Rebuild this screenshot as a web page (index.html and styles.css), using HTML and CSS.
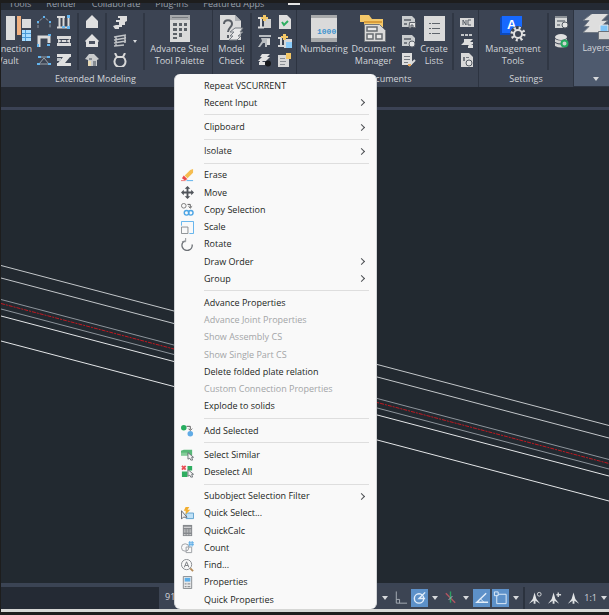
FILE: index.html
```html
<!DOCTYPE html>
<html lang="en">
<head>
<meta charset="utf-8">
<title>Advance Steel</title>
<link rel="stylesheet" href="styles.css">
</head>
<body>
<div class="app">
  <nav class="tabs">
    <a href="#">Tools</a><a href="#">Render</a><a href="#">Collaborate</a><a href="#">Plug-ins</a><a href="#">Featured Apps</a><span class="tab-toggle"></span>
  </nav>

  <header class="ribbon">
    <section class="panel panel-modeling">
      <div class="tools">
        <button class="big vault"><svg width="34" height="27" viewBox="0 0 34 27"><path fill="#dcdcdc" d="M9 1h9v24H9zM25 4h9v9h-9z"/><path fill="#f0b080" d="M20 1h4v19h-4z"/><path fill="#a9dcff" d="M25 15h9v11h-9z"/><path stroke="#4a9ad8" d="M25 18.500h9M25 22.500h9M28.500 15v11"/></svg><span>Connection<br>Vault</span></button>
        <div class="col">
          <button aria-label="Portal frame"><svg viewBox="0 0 14 14"><path d="M1 13V7l6-5 6 5v6" fill="none" stroke="#8f98a3" stroke-dasharray="3 1"/><path fill="#63b4ee" d="M6 1h2v2H6zM0 6h2v2H0zM12 6h2v2h-2z"/></svg></button>
          <button aria-label="Frame corner"><svg viewBox="0 0 14 14"><path d="M2 13V3h10v6" fill="none" stroke="#dadada" stroke-width="3"/><path fill="#63b4ee" d="M0 10h2v3H0zM11 0h3v2h-3zM10 10h3v2h-3z"/></svg></button>
          <button aria-label="Truss"><svg viewBox="0 0 14 14"><path d="M1 4h12M1 11h12M2 11l5-6 5 6" fill="none" stroke="#9ba3ac"/><path fill="#63b4ee" d="M1 3h3v2H1zM10 3h3v2h-3zM0 10h3v2H0zM11 10h3v2h-3z"/></svg></button>
        </div>
        <div class="col">
          <button aria-label="Columns"><svg viewBox="0 0 14 14"><path d="M0 2h8M2.500 2v10M6.500 2v10M11.500 3v9M0 12.500h13" fill="none" stroke="#dadada" stroke-width="2"/><path fill="#63b4ee" d="M10 0h3v3h-3zM5 11h3v2H5zM10 11h3v3h-3z"/></svg></button>
          <button aria-label="Bracing"><svg viewBox="0 0 14 14"><path fill="#dadada" d="M0 2h14v3H0zM0 9h14v3H0zM1 5l4 2-4 2zM13 5L9 7l4 2zM5 6h4v2H5z"/></svg></button>
          <button aria-label="Purlins"><svg viewBox="0 0 14 14"><path fill="#e0e0e0" d="M0 1h14v3H0zM0 10h14v3H0zM6 4h7l-5 6H1z"/><path fill="#bfc4c9" d="M0 5h4v3H0z"/></svg></button>
        </div>
        <i class="sep"></i>
        <div class="col">
          <button aria-label="House"><svg viewBox="0 0 14 14"><path fill="#e0e0e0" d="M7 0l6 6v7H1V6z"/></svg></button>
          <button aria-label="House opening"><svg viewBox="0 0 14 14"><path fill="#e0e0e0" d="M7 0l7 7-1 1v5H1V8L0 7z"/><path fill="#4b5260" d="M4 7h6v3H4z"/></svg></button>
          <button aria-label="House parts"><svg viewBox="0 0 14 14"><path fill="#c9cbcc" d="M4 1h5l5 5-2 1v6H3V7L0 6z"/><path fill="#858b92" d="M8 8h3v5H8zM4 5h3v2H4z"/><path fill="#e7d9b4" d="M3 8h3v5H3z"/></svg></button>
        </div>
        <i class="sep"></i>
        <div class="col">
          <button aria-label="Stairs"><svg viewBox="0 0 14 14"><path fill="#dedede" d="M5 1h9v5l-2 1v3H9v2H6v2H2l-2-3 3-1h3V7H3V5h4V3H5z"/></svg></button>
          <button aria-label="Railing"><svg viewBox="0 0 14 14"><path d="M1 3l12-2M1 6l12-2M1 9l12-2M1 12l10-1M3 2v10M12 1v8" fill="none" stroke="#c2c5c8" stroke-width="1.500"/></svg></button>
          <button aria-label="Cage"><svg viewBox="0 0 14 14"><path d="M2 0l2 4h6l2-4M4 4a5.500 5.500 0 1 0 6 0" fill="none" stroke="#d8d8d8" stroke-width="2"/></svg></button>
        </div>
        <i class="arrow mini"></i>
        <i class="sep"></i>
        <button class="big w57"><svg width="20" height="27" viewBox="0 0 20 27"><path fill="#dadada" d="M0 0h20v27H0z"/><path fill="#a5a8ab" d="M0 0h20v5H0z"/><path stroke="#777b80" fill="none" d="M2 2.500h16"/><path fill="#5d6268" d="M3 8h4v3H3zM9 8h3v3H9zM14 8h3v3h-3zM3 13h4v3H3zM9 13h3v3H9zM14 13h3v3h-3zM3 18h4v2H3zM9 18h3v4H9zM3 22h4v2H3z"/></svg><span>Advance Steel<br>Tool Palette</span></button>
      </div>
      <h2>Extended Modeling</h2>
    </section>

    <section class="panel">
      <div class="tools">
        <button class="big w25"><svg width="24" height="27" viewBox="0 0 24 27"><path fill="#dcdcdc" d="M0 0h15l6 6v19H0z"/><path fill="#aeb1b5" d="M15 0v6h6z"/><path d="M4 9c0-5 8-5 8 0 0 3-4 4-4 8M8 20v3" fill="none" stroke="#5a5f66" stroke-width="2"/><path fill="#e8e8e8" stroke="#777c83" d="M10 17l5-4h8l-3 4h3l-5 4h3l-4 4H9l4-4h-3l4-4z"/></svg><span>Model<br>Check</span></button>
        <i class="sep"></i>
        <div class="col">
          <button aria-label="New number"><svg viewBox="0 0 14 14"><path d="M0 3h3v9M0 12.500h6" fill="none" stroke="#ddd" stroke-width="2"/><path fill="#cfcfcf" d="M6 4h7v9H6z"/><path fill="#f3c766" d="M5 0h3v2h2v2H8v2H5V4H3V2h2z"/></svg></button>
          <button aria-label="Section text"><svg viewBox="0 0 14 14"><path fill="#b9bdc1" d="M1 1h12v2H1zM3 4h9v2H9v7H7V9H5l-3 4H0l4-6z"/><path fill="#dedede" d="M9 5h3v6H9z"/></svg></button>
          <button aria-label="Plate check"><svg viewBox="0 0 14 14"><path fill="#e2e2e2" d="M4 1h8L9 4h3L8 8H5l-4 4 1-4H0l4-4H2z"/><path fill="#e2e2e2" d="M1 9h6v3H1z"/><circle cx="10" cy="10.500" r="3" fill="#17191c"/></svg></button>
        </div>
        <div class="col">
          <button aria-label="Approve"><svg viewBox="0 0 14 14"><path fill="#dedede" d="M1 0h8l4 4v10H1z"/><path d="M4 7l2 3 4-4" fill="none" stroke="#2fae61" stroke-width="2"/></svg></button>
          <button aria-label="Number table"><svg viewBox="0 0 14 14"><path fill="#d8d8d8" d="M0 3h4v8h2v2H0v-2h2V5H0zM6 5h8v9H6z"/><path fill="#8acbf8" d="M8 8h6v6H8z"/><path fill="#f3c766" d="M5 0h3v2h2v2H8v2H5V4H3V2h2z"/></svg></button>
          <button aria-label="Drawing list"><svg viewBox="0 0 14 14"><path fill="#d8d8d8" d="M0 2h11v12H0z"/><path stroke="#8a8e93" d="M2 5.500h5M2 8.500h6M2 11.500h5"/><path fill="#f3c766" d="M8 0h5v6H8z"/></svg></button>
        </div>
      </div>
    </section>

    <section class="panel">
      <div class="tools">
        <button class="big w42"><svg width="26" height="27" viewBox="0 0 26 27"><path fill="#dadada" d="M0 0h26v27H0z"/><path fill="#a7a9ab" d="M0 0h26v3H0zM0 23h26v4H0z"/><text x="6" y="19" class="digits">1000</text></svg><span>Numbering</span></button>
        <button class="big w45"><svg width="27" height="27" viewBox="0 0 27 27"><path fill="#f4c869" d="M0 0h9l3 4h11v15H4V7H0z"/><path fill="#d99d3b" d="M4 6h18v2H4z"/><path fill="#dadada" stroke="#73777c" d="M4.500 9.500h15l6 6v11h-21z"/><path fill="#e7e7e7" stroke="#676c72" stroke-width="1.500" d="M7 12h10v4H7zM7 19h6v5H7zM16 19h6v5h-6z"/></svg><span>Document<br>Manager</span></button>
        <div class="col">
          <button aria-label="Find drawing"><svg viewBox="0 0 14 14"><path fill="#c9ccce" d="M0 1h10l3 3v8H0z"/><path fill="#747980" d="M2 4h7v2H2zM2 8h3v2H2z"/><path fill="#e6e6e6" stroke="#5c6169" d="M7.500 7.500h6v5H11V10H9v3H7z"/></svg></button>
          <button aria-label="Drawing settings"><svg viewBox="0 0 14 14"><path fill="#c9ccce" d="M0 1h10l3 3v8H0z"/><path fill="#747980" d="M2 4h7v2H2zM2 8h3v2H2z"/><circle cx="10" cy="10" r="3" fill="#e6e6e6" stroke="#5c6169"/></svg></button>
          <button aria-label="Edit drawing"><svg viewBox="0 0 14 14"><path fill="#dedede" d="M0 0h10v12H0z"/><path stroke="#777c82" d="M2 3.500h6M2 6.500h6M2 9.500h4"/><path d="M7 13l6-6" stroke="#dadada" stroke-width="2"/><path fill="#e5a55a" d="M6 11h3v2H6z"/></svg></button>
        </div>
        <button class="big w24"><svg width="21" height="27" viewBox="0 0 21 27"><path fill="#dadada" d="M0 1h21v25H0z"/><path stroke="#5f646b" d="M8 8.500h8M8 13.500h8M8 18.500h8"/><path fill="#5f646b" d="M5 8h2v1H5zM5 13h2v1H5zM5 18h2v1H5z"/></svg><span>Create<br>Lists</span></button>
        <i class="sep"></i>
        <div class="col">
          <button aria-label="NC files"><svg viewBox="0 0 14 14"><path fill="#d8d8d8" d="M0 3h14v9H0z"/><path d="M3 10V5l3 5V5M11 5H8v5h3" fill="none" stroke="#5a6068"/></svg></button>
          <button aria-label="DXF files"><svg viewBox="0 0 14 14"><path stroke="#c3c6c9" stroke-width="2" stroke-dasharray="3 1" d="M1 1h12"/><path fill="#dedede" d="M4 5h9l-3 3h3v2l-2 1h2v3H8v-2l1-1H1l3-3z"/></svg></button>
          <button aria-label="NC settings"><svg viewBox="0 0 14 14"><path fill="#d8d8d8" d="M1 0h8l4 4v10H1z"/><path fill="#747980" d="M3 4h2v4H3zM6 4h3v1H6z"/><circle cx="9" cy="10" r="3" fill="#e5e5e5" stroke="#555b64"/></svg></button>
        </div>
      </div>
      <h2>Documents</h2>
    </section>

    <section class="panel">
      <div class="tools">
        <button class="big w56"><svg width="26" height="27" viewBox="0 0 26 27"><path fill="#1769ff" d="M2 1h20v19H2z"/><path fill="#0d4abb" d="M2 1L0 3v17h20l2-2H2z"/><text x="7" y="14" class="brand">A</text><circle cx="18" cy="19" r="5" fill="none" stroke="#3c4453" stroke-width="6"/><circle cx="18" cy="19" r="6" fill="none" stroke="#e0e0e0" stroke-width="3" stroke-dasharray="2 2.700"/><circle cx="18" cy="19" r="4" fill="#3c4453" stroke="#e0e0e0" stroke-width="2"/></svg><span>Management<br>Tools</span></button>
        <i class="sep"></i>
        <div class="col">
          <button aria-label="Table settings"><svg viewBox="0 0 14 14"><path fill="#d5d7d8" d="M0 1h12v12H0z"/><path fill="#8b9096" d="M0 1h12v2H0zM2 5h8v2H2zM2 9h3v2H2z"/><circle cx="10" cy="10" r="3" fill="#e6e6e6" stroke="#555b64"/></svg></button>
          <button aria-label="Update database"><svg viewBox="0 0 14 14"><ellipse cx="6" cy="3" rx="6" ry="3" fill="#e0e0e0"/><path fill="#d4d4d4" d="M0 5q6 3 12 0v3q-6 3-12 0zM0 9q6 3 12 0v3q-6 3-12 0z"/><circle cx="9.500" cy="9.500" r="3" fill="#ccd8cf" stroke="#24ad60" stroke-width="2"/></svg></button>
        </div>
      </div>
      <h2>Settings</h2>
    </section>

    <section class="panel panel-layers">
      <button class="big w44"><svg width="26" height="27" viewBox="0 0 26 27"><path fill="#dedede" stroke="#707883" d="M0 6.500l9-7h17l-7 7h6l-7 6h6l-6 6H0l6-6H1l5-6z"/><path fill="#7fc5f8" stroke="#e9e9e9" d="M17 11h8v8h-8z"/><path fill="#d4d4d4" stroke="#6b7179" d="M15.500 17.500h11v8h-11z"/></svg><span>Layers</span></button>
      <i class="arrow"></i>
    </section>
  </header>

  <div class="file-strip"></div>

  <main class="canvas">
    <svg viewBox="0 110 608 473" preserveAspectRatio="none" aria-label="Steel beam model">
      <g fill="none" stroke="#c3c7ca">
        <path d="M0 265.500L608 425.500M0 278L608 438"/>
        <path stroke="#8d949b" d="M0 299.500L608 459.500M0 309L608 469"/>
        <path stroke="#e4e6e8" d="M0 316L608 476M0 341L608 501"/>
        <path stroke="#c01820" stroke-dasharray="4 1 2 1" d="M0 303.500L608 463.500"/>
      </g>
    </svg>
  </main>

  <footer class="status">
    <output class="coords">91</output>
    <div class="status-tools">
      <i class="arrow"></i>
      <button aria-label="Ortho"><svg viewBox="0 0 16 16"><path d="M3.500 1v12.500H15M3.500 9.500H7v4" fill="none" stroke="#aab0b8"/></svg></button>
      <button class="on" aria-label="Polar tracking"><svg viewBox="0 0 16 16"><circle cx="7.500" cy="8.500" r="5" fill="none" stroke="#e3eefa" stroke-width="1.500"/><path d="M14 8.500H7.500L14 2" fill="none" stroke="#e3eefa" stroke-width="1.500"/></svg></button>
      <i class="arrow"></i>
      <button aria-label="Isodraft"><svg viewBox="0 0 16 16"><path d="M3 3l10 10" stroke="#b45460" stroke-width="1.500"/><path d="M8 1v12" stroke="#2d9f63" stroke-width="1.500"/><path d="M6 10l4-4" stroke="#b9bec5"/></svg></button>
      <i class="arrow"></i>
      <button class="on" aria-label="Object snap tracking"><svg viewBox="0 0 16 16"><path d="M13 3L3 12.500h12" fill="none" stroke="#e3eefa" stroke-width="1.500"/><path d="M7 9l4 4" stroke="#e3eefa"/></svg></button>
      <button class="on" aria-label="Object snap"><svg viewBox="0 0 16 16"><path d="M4 4h10v10H4z" fill="none" stroke="#e3eefa"/><path d="M1.500 1.500h4v4h-4z" fill="#5d91c9" stroke="#e3eefa"/></svg></button>
      <i class="arrow"></i>
      <i class="status-gap"></i>
      <button aria-label="Annotation visibility"><svg viewBox="0 0 16 16"><path d="M7 2l2 7 4 5-5-3v3H6v-3l-5 3 4-5z" fill="#e1e3e5"/><circle cx="12" cy="4" r="2" fill="none" stroke="#d5d8da"/></svg></button>
      <button aria-label="Auto scale"><svg viewBox="0 0 16 16"><path d="M7 2l2 7 4 5-5-3v3H6v-3l-5 3 4-5z" fill="#e1e3e5"/><path d="M12 2v5M10 4.500h5" stroke="#d5d8da" stroke-width="1.500"/></svg></button>
      <button aria-label="Annotation scale"><svg viewBox="0 0 16 16"><path d="M8 2l2 7 4 5-5-3v3H7v-3l-5 3 4-5z" fill="#e1e3e5"/></svg></button>
      <button class="scale">1:1</button>
      <i class="arrow"></i>
    </div>
  </footer>

  <div class="menu" role="menu">
    <button role="menuitem">Repeat VSCURRENT</button>
    <button role="menuitem" class="sub">Recent Input</button>
    <hr>
    <button role="menuitem" class="sub">Clipboard</button>
    <hr>
    <button role="menuitem" class="sub">Isolate</button>
    <hr>
    <button role="menuitem"><svg viewBox="0 0 14 14"><path fill="#f5bd50" d="M10 1l3-1v4l-6 6-3-3z"/><path fill="#e94949" d="M3 7l4 4-3 1-3-2z"/><path stroke="#ee7777" d="M0 12.500h5"/><path stroke="#55aeea" d="M6 12.500h7"/></svg>Erase</button>
    <button role="menuitem"><svg viewBox="0 0 14 14"><path fill="#50545a" d="M6 6V3H4l3-3 3 3H8v3h3V4l3 3-3 3V8H8v3h2l-3 3-3-3h2V8H3v2L0 7l3-3v2z"/></svg>Move</button>
    <button role="menuitem"><svg viewBox="0 0 14 14"><circle cx="3" cy="3" r="2.500" fill="none" stroke="#777"/><path d="M7 1.500h3V5M8 3.500l2 2 2-2" fill="none" stroke="#555"/><circle cx="6" cy="10.500" r="2.500" fill="none" stroke="#4ca5e5" stroke-width="1.500"/><circle cx="10.500" cy="10.500" r="2.500" fill="none" stroke="#4ca5e5" stroke-width="1.500"/></svg>Copy Selection</button>
    <button role="menuitem"><svg viewBox="0 0 14 14"><path d="M.5 5V.5h13v13H9" fill="none" stroke="#58aeea"/><path d="M.5 6.500h7v7h-7z" fill="none" stroke="#85898e"/></svg>Scale</button>
    <button role="menuitem"><svg viewBox="0 0 14 14"><path d="M4 3a5.500 5.500 0 1 0 8 4" fill="none" stroke="#6d7176" stroke-width="1.500"/><path d="M5 0v4H1" fill="none" stroke="#888c91"/></svg>Rotate</button>
    <button role="menuitem" class="sub">Draw Order</button>
    <button role="menuitem" class="sub">Group</button>
    <hr>
    <button role="menuitem">Advance Properties</button>
    <button role="menuitem" disabled>Advance Joint Properties</button>
    <button role="menuitem" disabled>Show Assembly CS</button>
    <button role="menuitem" disabled>Show Single Part CS</button>
    <button role="menuitem">Delete folded plate relation</button>
    <button role="menuitem" disabled>Custom Connection Properties</button>
    <button role="menuitem">Explode to solids</button>
    <hr>
    <button role="menuitem"><svg viewBox="0 0 14 14"><circle cx="3" cy="4" r="3" fill="#27ad5f"/><path d="M6 2.500h4V6M8 5l2 2 2-2" fill="none" stroke="#555"/><circle cx="10" cy="10.500" r="3" fill="#60abe6"/></svg>Add Selected</button>
    <hr>
    <button role="menuitem"><svg viewBox="0 0 14 14"><path fill="#58b878" d="M3 2h9v6H0V3z"/><path fill="#83cc98" d="M0 5h7v3H0z"/><path fill="#f3f3f3" stroke="#6c7176" d="M7.500 5v7l2-1 1 2h2l-1-3h2z"/></svg>Select Similar</button>
    <button role="menuitem"><svg viewBox="0 0 14 14"><path fill="#30ae61" d="M7 1h5v5H7zM1 7h6v6H1z"/><path d="M1 1l4 4M5 1L1 5" stroke="#e84d54" stroke-width="2"/><path fill="#f3f3f3" stroke="#6c7176" d="M7.500 5v7l2-1 1 2h2l-1-3h2z"/></svg>Deselect All</button>
    <hr>
    <button role="menuitem" class="sub">Subobject Selection Filter</button>
    <button role="menuitem"><svg viewBox="0 0 14 14"><path fill="#bfe1f7" stroke="#5d9fcb" d="M5.500 6.500h8v6h-8z"/><path fill="#eee" stroke="#61666c" d="M.5 4v9l2-2h4z"/><path fill="#f2ae2e" d="M5 0h4L7 3h3L5 8V4H3z"/></svg>Quick Select...</button>
    <button role="menuitem"><svg viewBox="0 0 14 14"><path fill="#85888c" d="M2 1h10v12H2z"/><path stroke="#eee" d="M3 3.500h8"/><path stroke="#ddd" stroke-dasharray="2 1" d="M3 6.500h8M3 8.500h8M3 11.500h8"/></svg>QuickCalc</button>
    <button role="menuitem"><svg viewBox="0 0 14 14"><circle cx="4.500" cy="7" r="4" fill="none" stroke="#999da1"/><path d="M5.500 6.500h6v6h-6z" fill="none" stroke="#999da1"/><path d="M8 2h6M8 4h6M9.500 0v6M12 0v6" stroke="#52a8e5"/></svg>Count</button>
    <button role="menuitem"><svg viewBox="0 0 14 14"><circle cx="6" cy="6" r="5.500" fill="none" stroke="#85898e"/><path d="M3.500 9L6 3l2.500 6M4.500 7h3" fill="none" stroke="#777b80"/><path d="M10 10l3 3" stroke="#b58c59" stroke-width="2"/></svg>Find...</button>
    <button role="menuitem"><svg viewBox="0 0 14 14"><path fill="#e7e8e9" stroke="#85898e" d="M2.500.5h9v13h-9z"/><path fill="#5dafe9" d="M4 2h6v4H4z"/><path stroke="#777b80" d="M4 8.500h2M7 8.500h3M4 11.500h2M7 11.500h3"/></svg>Properties</button>
    <button role="menuitem">Quick Properties</button>
  </div>
</div>
</body>
</html>
```

FILE: styles.css
```css
* { box-sizing: border-box; }

body {
  margin: 0;
  background: #1d1d1d;
  font: 9px/12px "Open Sans", "Noto Sans", sans-serif;
}

button {
  border: 0;
  padding: 0;
  margin: 0;
  background: none;
  color: inherit;
  font: inherit;
}

svg { display: block; flex: none; }

.app {
  position: relative;
  display: flex;
  flex-direction: column;
  height: 100vh;
  padding: 3px 0 3px 1px;
  overflow: hidden;
  color: #d2d5da;
}

/* Ribbon tabs */
.tabs {
  display: flex;
  flex: none;
  align-items: flex-end;
  gap: 15px;
  height: 7px;
  padding-left: 8px;
  overflow: hidden;
  background: #242a34;
}

.tabs a { color: #9ba1aa; text-decoration: none; white-space: nowrap; }

.tab-toggle {
  align-self: flex-start;
  width: 12px;
  height: 2px;
  margin-left: 9px;
  background: #e4e4e4;
}

/* Ribbon */
.ribbon {
  display: flex;
  flex: none;
  height: 77px;
  overflow: hidden;
  background: #3c4453;
}

.panel {
  display: flex;
  flex: none;
  flex-direction: column;
  border-right: 1px solid #2d3441;
}

.panel-modeling { margin-left: -22px; }

.panel h2 {
  margin: 0;
  font-size: 9px;
  font-weight: 400;
  line-height: 14px;
  text-align: center;
}

.tools {
  display: flex;
  gap: 6px;
  height: 62px;
  padding: 5px 4px 0 6px;
}

.col {
  display: flex;
  flex-direction: column;
  gap: 5px;
}

.col svg { width: 14px; height: 14px; }

.sep {
  width: 2px;
  height: 57px;
  margin-top: -2px;
  background: #303744;
}

.big {
  display: flex;
  flex: none;
  flex-direction: column;
  align-items: center;
  gap: 1px;
  white-space: nowrap;
}

.vault { width: 46px; }
.vault svg { margin-left: 12px; }
.w24 { width: 24px; }
.w25 { width: 25px; }
.w42 { width: 42px; }
.w44 { width: 44px; }
.w45 { width: 45px; }
.w56 { width: 56px; }
.w57 { width: 57px; }

.digits { fill: #3f93cf; font: bold 8px "Liberation Mono", monospace; }
.brand { fill: #fff; font: bold 13px "Liberation Sans", sans-serif; }

.arrow {
  width: 0;
  height: 0;
  border: 3px solid transparent;
  border-top: 4px solid #d7d9dc;
  border-bottom: 0;
}

.arrow.mini {
  margin-top: 25px;
  border-width: 3px 2px 0;
}

.panel-layers {
  flex: 1;
  align-items: flex-start;
  justify-content: space-between;
  min-width: 0;
  padding: 4px 0 5px;
  border: 0;
  border-bottom: 1px solid #2d3441;
  background: #4e5a6e;
}

.panel-layers .arrow { margin-left: 19px; }

.file-strip {
  flex: none;
  height: 23px;
  border-bottom: 3px solid #3b4255;
  background: #242932;
}

/* Drawing area */
.canvas {
  flex: 1;
  min-height: 0;
  background: #222930;
}

.canvas svg { width: 100%; height: 100%; }

/* Status bar */
.status {
  display: flex;
  flex: none;
  height: 29px;
  padding-left: 158px;
  border-top: 4px solid #3b4454;
  border-bottom: 3px solid #d6d7d5;
  background: #242a34;
}

.coords {
  flex: 1;
  padding: 4px 6px;
  background: #3c4453;
}

.status-tools {
  display: flex;
  align-items: center;
  gap: 2px;
  background: #3c4453;
}

.status-tools button { padding: 1px; }
.status-tools svg { width: 15px; height: 16px; }
.status-tools .scale { padding: 0; }
.status-tools .on { background: #5d91c9; }
.status-tools .arrow { margin: 0 2px; }
.status-gap { width: 2px; height: 22px; background: #2b323e; }

/* Context menu */
.menu {
  position: absolute;
  top: 74px;
  bottom: 6px;
  left: 174px;
  display: flex;
  flex-direction: column;
  width: 203px;
  padding: 3px 7px 1px 6px;
  border: 1px solid #d3d5d7;
  border-width: 0 1px;
  border-radius: 6px;
  background: #f9f9f9;
  color: #1c1f23;
}

.menu button {
  display: flex;
  flex: 1;
  align-items: center;
  min-height: 0;
  padding-left: 23px;
  text-align: left;
  white-space: nowrap;
}

.menu button:disabled { color: #a3a5a7; }

.menu svg {
  width: 13px;
  height: 13px;
  margin: 0 10px 0 -23px;
}

.menu .sub::after {
  width: 4px;
  height: 4px;
  margin: 0 5px 0 auto;
  border: solid #4c4f53;
  border-width: 1px 1px 0 0;
  content: "";
  transform: rotate(45deg);
}

.menu hr {
  flex: none;
  width: auto;
  height: 1px;
  margin: 3px 0 3px 23px;
  border: 0;
  background: #dedede;
}
```
